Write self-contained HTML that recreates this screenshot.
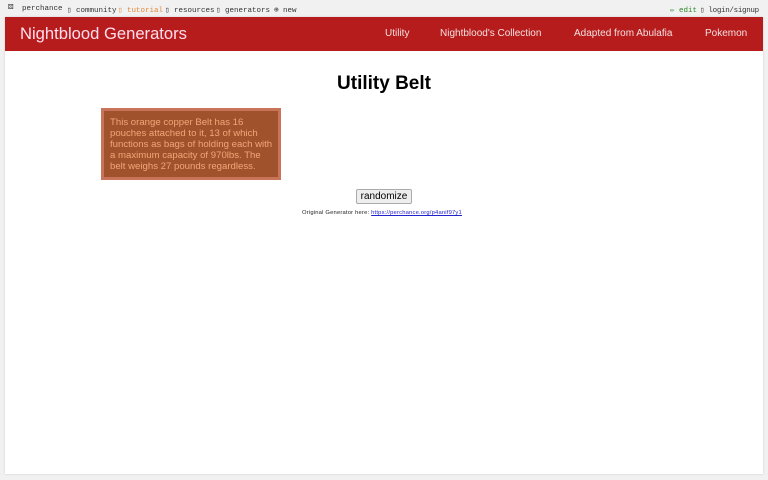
<!DOCTYPE html>
<html><head><style>
body{margin:0;width:768px;height:480px;background:#f1f1f1;font-family:"Liberation Sans",sans-serif;position:relative;overflow:hidden}
.top{position:absolute;top:0;left:0;right:0;height:17px;font-family:"Liberation Mono",monospace;font-size:7.5px;color:#333}
.top span{position:absolute;top:5px}
.card{position:absolute;left:5px;top:17px;width:758px;height:457px;background:#fff;box-shadow:0 0 2px #ccc}
.hdr{position:absolute;left:0;top:0;width:758px;height:34px;background:#b71c1c;color:#fff}
.hdr .t{position:absolute;left:15px;top:7px;font-size:16.6px;color:#fde}
.hdr .n{position:absolute;top:11px;font-size:10px;color:#f5e0e0}
h1{position:absolute;top:56px;left:0;width:758px;text-align:center;margin:0;font-size:19px;font-weight:bold}
.box{position:absolute;left:96px;top:91px;width:174px;height:66px;background:#a0522d;border:3px solid #c8735a;color:#f2a677;font-size:9.6px;line-height:11px}
.box div{padding:6px 4px 0 6px}
.btn{position:absolute;left:351px;top:172px;width:54px;height:13px;background:#eee;border:1px solid #aaa;font-size:10px;text-align:center;line-height:14px;border-radius:2px}
.orig{position:absolute;top:193px;left:297px;font-size:5.8px;color:#222;letter-spacing:.2px}
.orig u{color:#22c}
</style></head><body>
<div class="top">
<span style="left:8px;font-size:9px;top:2px">⚄</span>
<span style="left:22px">perchance</span>
<span style="left:67px">▯ community</span>
<span style="left:118px;color:#e08a3a">▯ tutorial</span>
<span style="left:165px">▯ resources</span>
<span style="left:216px">▯ generators</span>
<span style="left:274px">⊕ new</span>
<span style="left:670px;color:#2a8a2a">✏ edit</span>
<span style="left:700px;letter-spacing:-0.3px">▯ login/signup</span>
</div>
<div class="card">
<div class="hdr"><div class="t">Nightblood Generators</div>
<div class="n" style="left:380px">Utility</div>
<div class="n" style="left:435px">Nightblood's Collection</div>
<div class="n" style="left:569px">Adapted from Abulafia</div>
<div class="n" style="left:700px">Pokemon</div></div>
<h1>Utility Belt</h1>
<div class="box"><div>This orange copper Belt has 16 pouches attached to it, 13 of which functions as bags of holding each with a maximum capacity of 970lbs. The belt weighs 27 pounds regardless.</div></div>
<div class="btn">randomize</div>
<div class="orig">Original Generator here: <u>https://perchance.org/p4anif97y1</u></div>
</div>
</body></html>
